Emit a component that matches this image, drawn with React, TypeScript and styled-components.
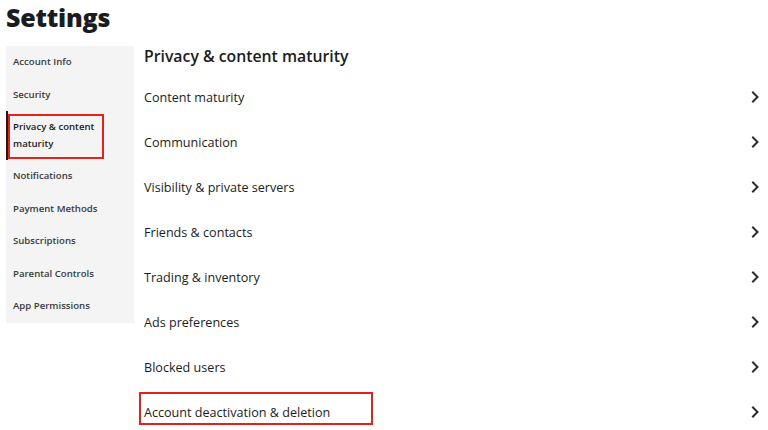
import React from "react";
import styled, { createGlobalStyle } from "styled-components";

const Global = createGlobalStyle`
  html, body { margin: 0; padding: 0; background: #ffffff; }
  body { font-family: "Open Sans", "Noto Sans", sans-serif; color: #1e1f21; }
  * { box-sizing: border-box; }
`;

const Page = styled.div`
  width: 768px;
  height: 430px;
  overflow: hidden;
  padding: 0 6px;
`;

const Title = styled.h1`
  margin: 0;
  height: 46px;
  padding-top: 2px;
  font-size: 25px;
  line-height: 30px;
  font-weight: 800;
  color: #1b1c1e;
  letter-spacing: -0.2px;
`;

const Body = styled.div`
  display: flex;
  align-items: flex-start;
  gap: 10px;
`;

const Sidebar = styled.nav`
  width: 128px;
  flex: none;
  background: #f4f4f4;
  display: flex;
  flex-direction: column;
`;

const NavItem = styled.div<{ $active?: boolean }>`
  position: relative;
  padding: 8px 0 8px 5px;
  font-size: 9.6px;
  line-height: 16.5px;
  font-weight: 600;
  border-left: 2px solid ${(p) => (p.$active ? "#1b1c1e" : "transparent")};
  color: ${(p) => (p.$active ? "#1b1c1e" : "#393b3d")};
`;

const Highlight = styled.span<{ $top: number; $left: number; $w: number; $h: number }>`
  position: absolute;
  top: ${(p) => p.$top}px;
  left: ${(p) => p.$left}px;
  width: ${(p) => p.$w}px;
  height: ${(p) => p.$h}px;
  border: 2px solid #e2231a;
  pointer-events: none;
`;

const Main = styled.main`
  flex: 1;
`;

const Heading = styled.h2`
  margin: 0;
  height: 28.5px;
  font-size: 15.8px;
  line-height: 20px;
  font-weight: 600;
  color: #1b1c1e;
`;

const Row = styled.div`
  position: relative;
  height: 45px;
  display: flex;
  align-items: center;
  justify-content: space-between;
  font-size: 12.6px;
  color: #1b1c1e;
  padding-right: 2px;
`;

const Chevron = () => (
  <svg width="10" height="12" viewBox="0 0 10 12" fill="none">
    <path d="M3 1.5 L7.5 6 L3 10.5" stroke="#2a2b2e" strokeWidth="2" strokeLinecap="square" />
  </svg>
);

const navItems = [
  "Account Info",
  "Security",
  "Privacy & content maturity",
  "Notifications",
  "Payment Methods",
  "Subscriptions",
  "Parental Controls",
  "App Permissions",
];

const rows = [
  "Content maturity",
  "Communication",
  "Visibility & private servers",
  "Friends & contacts",
  "Trading & inventory",
  "Ads preferences",
  "Blocked users",
  "Account deactivation & deletion",
];

export default function App() {
  return (
    <Page>
      <Global />
      <Title>Settings</Title>
      <Body>
        <Sidebar>
          {navItems.map((n, i) => (
            <NavItem key={n} $active={i === 2}>
              {i === 2 ? (
                <>
                  Privacy &amp; content
                  <br />
                  maturity
                  <Highlight $top={3} $left={0} $w={96} $h={45} />
                </>
              ) : (
                n
              )}
            </NavItem>
          ))}
        </Sidebar>
        <Main>
          <Heading>Privacy &amp; content maturity</Heading>
          {rows.map((r, i) => (
            <Row key={r}>
              <span>{r}</span>
              <Chevron />
              {i === rows.length - 1 && <Highlight $top={2} $left={-5} $w={234} $h={33} />}
            </Row>
          ))}
        </Main>
      </Body>
    </Page>
  );
}
